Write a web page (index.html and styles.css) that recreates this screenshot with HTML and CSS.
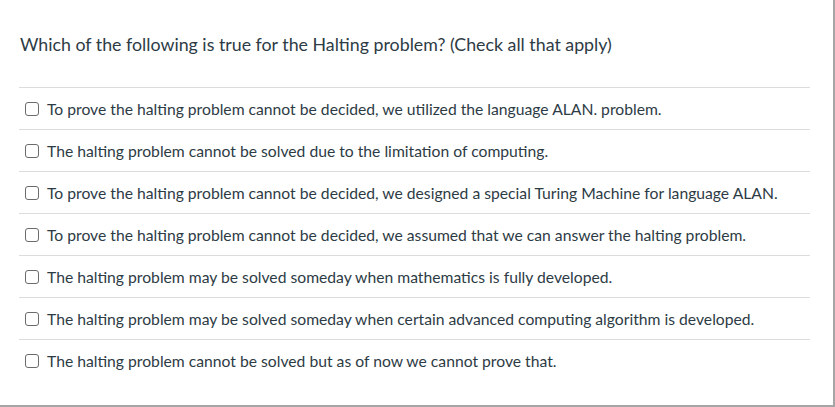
FILE: index.html
```html
<!DOCTYPE html>
<html>
<head>
<meta charset="utf-8">
<link rel="stylesheet" href="styles.css">
</head>
<body>
<div class="quiz">
  <div class="question">Which of the following is true for the Halting problem? (Check all that apply)</div>
  <div class="answers">
    <label class="answer"><span class="box"></span><span class="text">To prove the halting problem cannot be decided, we utilized the language ALAN. problem.</span></label>
    <label class="answer"><span class="box"></span><span class="text">The halting problem cannot be solved due to the limitation of computing.</span></label>
    <label class="answer"><span class="box"></span><span class="text">To prove the halting problem cannot be decided, we designed a special Turing Machine for language ALAN.</span></label>
    <label class="answer"><span class="box"></span><span class="text">To prove the halting problem cannot be decided, we assumed that we can answer the halting problem.</span></label>
    <label class="answer"><span class="box"></span><span class="text">The halting problem may be solved someday when mathematics is fully developed.</span></label>
    <label class="answer"><span class="box"></span><span class="text">The halting problem may be solved someday when certain advanced computing algorithm is developed.</span></label>
    <label class="answer"><span class="box"></span><span class="text">The halting problem cannot be solved but as of now we cannot prove that.</span></label>
  </div>
</div>
</body>
</html>
```
FILE: styles.css
```css
html, body {
  margin: 0;
  padding: 0;
  background: #fff;
}
.quiz {
  box-sizing: border-box;
  width: 835px;
  height: 407px;
  border-right: 2px solid #a5a5a5;
  border-bottom: 2px solid #a5a5a5;
  font-family: Lato, "Noto Sans", sans-serif;
  color: #2d3b45;
}
.question {
  padding: 34px 0 0 20px;
  height: 87px;
  box-sizing: border-box;
  font-size: 17.8px;
  line-height: 20px;
}
.answers {
  margin: 0 23px 0 19px;
}
.answer {
  display: flex;
  align-items: center;
  height: 42px;
  box-sizing: border-box;
  border-top: 1px solid #dcdcdc;
  padding-left: 6px;
  font-size: 15.7px;
}
.box {
  width: 14px;
  height: 14px;
  box-sizing: border-box;
  border: 1.5px solid #6b6b6b;
  border-radius: 3px;
  margin-right: 8px;
  flex: none;
}
.text {
  line-height: 18px;
}
```
